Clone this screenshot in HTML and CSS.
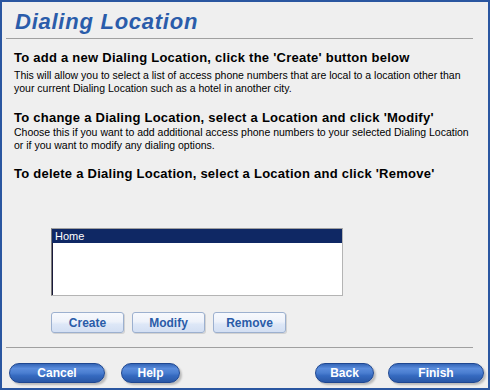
FILE: index.html
```html
<!DOCTYPE html>
<html>
<head>
<meta charset="utf-8">
<link rel="stylesheet" href="styles.css">
</head>
<body>
<div class="window">
  <h1 class="title">Dialing Location</h1>
  <div class="rule top-rule"></div>
  <h2 class="heading h-first">To add a new Dialing Location, click the 'Create' button below</h2>
  <p class="desc d-first">This will allow you to select a list of access phone numbers that are local to a location other than your current Dialing Location such as a hotel in another city.</p>
  <h2 class="heading h-second">To change a Dialing Location, select a Location and click 'Modify'</h2>
  <p class="desc d-second">Choose this if you want to add additional access phone numbers to your selected Dialing Location or if you want to modify any dialing options.</p>
  <h2 class="heading h-third">To delete a Dialing Location, select a Location and click 'Remove'</h2>
  <div class="listbox">
    <div class="item selected">Home</div>
  </div>
  <div class="actions">
    <button class="small-btn">Create</button>
    <button class="small-btn">Modify</button>
    <button class="small-btn">Remove</button>
  </div>
  <div class="rule bottom-rule"></div>
  <div class="nav">
    <div class="nav-group">
      <button class="pill wide">Cancel</button>
      <button class="pill narrow help">Help</button>
    </div>
    <div class="nav-group">
      <button class="pill narrow">Back</button>
      <button class="pill wide finish">Finish</button>
    </div>
  </div>
</div>
</body>
</html>
```
FILE: styles.css
```css
html, body {
  margin: 0;
  padding: 0;
  background: #efefef;
}
.window {
  width: 490px;
  height: 390px;
  box-sizing: border-box;
  border: 2px solid #2a56a0;
  background: #efefef;
  display: flex;
  flex-direction: column;
  font-family: "Liberation Sans", Arial, sans-serif;
  overflow: hidden;
}
.title {
  margin: 8px 0 0 13px;
  font-size: 22px;
  line-height: 24px;
  font-weight: bold;
  font-style: italic;
  letter-spacing: 0.75px;
  color: #2a5caa;
}
.rule {
  height: 1px;
  background: #a0a0a0;
  margin-left: 4px;
  width: 467px;
}
.top-rule {
  margin-top: 4px;
}
.heading {
  margin: 0 0 0 12px;
  font-size: 13px;
  line-height: 16px;
  font-weight: bold;
  color: #000;
  letter-spacing: 0.25px;
}
.h-first { margin-top: 11px; }
.h-second { margin-top: 15px; }
.h-third { margin-top: 14px; }
.desc {
  margin: 0 0 0 12px;
  font-size: 10.5px;
  line-height: 13px;
  color: #000;
  width: 464px;
}
.d-first { margin-top: 3px; }
.d-second { margin-top: 0; }
.listbox {
  margin: 46px 0 0 49px;
  width: 292px;
  height: 68px;
  box-sizing: border-box;
  border: 1px solid #b4b4b4;
  border-top-color: #a0a0a0;
  border-left-color: #7a7a7a;
  background: #fff;
  box-shadow: inset 1px 0 0 #1a1a3a;
}
.item {
  height: 14px;
  line-height: 14px;
  font-size: 11px;
  padding-left: 3px;
}
.selected {
  background: #0f2864;
  color: #fff;
}
.actions {
  display: flex;
  gap: 8px;
  margin: 16px 0 0 49px;
}
.small-btn {
  width: 73px;
  height: 21px;
  box-sizing: border-box;
  border: 1px solid #9cb0cf;
  border-radius: 3px;
  background: linear-gradient(#f7f9fd 0%, #eef2fa 45%, #dde7f7 60%, #d3dff3 100%);
  box-shadow: 1px 1px 0 #d2d2d2;
  color: #2a5ca8;
  font-family: "Liberation Sans", Arial, sans-serif;
  font-weight: bold;
  font-size: 12px;
  padding: 0;
}
.bottom-rule {
  margin-top: 14px;
}
.nav {
  display: flex;
  justify-content: space-between;
  margin: 15px 4px 0 7px;
}
.nav-group {
  display: flex;
}
.pill {
  height: 20px;
  box-sizing: border-box;
  border: 1px solid #1f4790;
  border-radius: 10px;
  background: linear-gradient(#3566b8 0%, #5a8cdc 25%, #4a7ed0 50%, #356ac0 65%, #2a58a6 100%);
  box-shadow: 2px 2px 2px rgba(0, 0, 0, 0.22);
  color: #fff;
  font-family: "Liberation Sans", Arial, sans-serif;
  font-weight: bold;
  font-size: 12px;
  padding: 0;
}
.wide { width: 96px; }
.narrow { width: 59px; }
.help { margin-left: 16px; }
.finish { margin-left: 14px; }
```
